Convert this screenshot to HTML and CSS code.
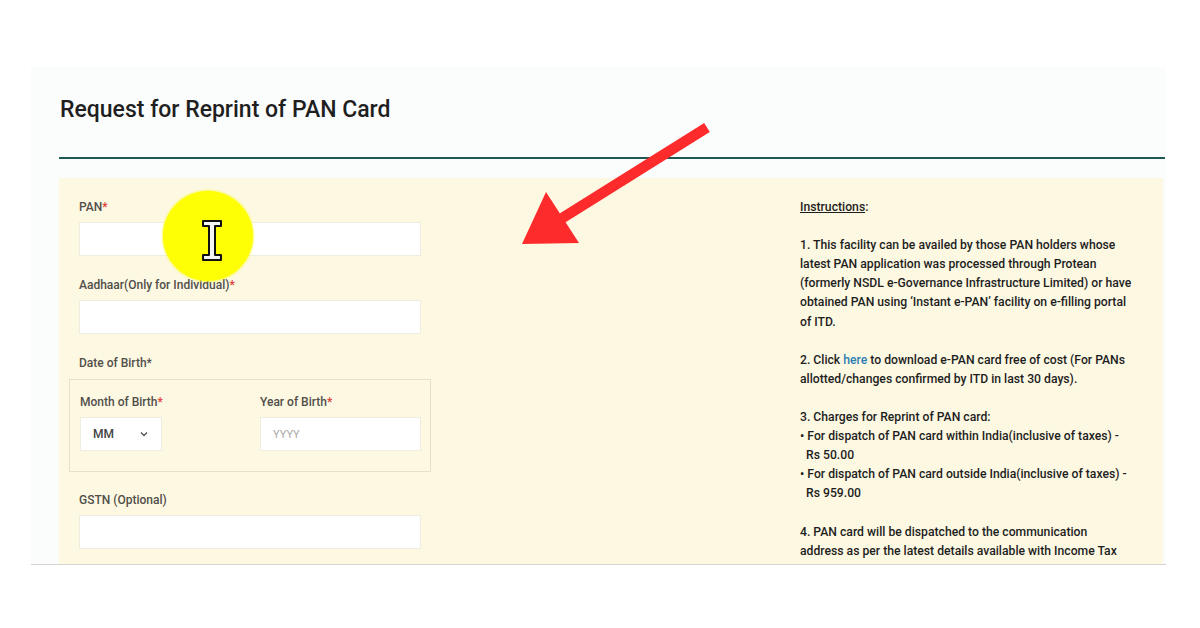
FILE: index.html
```html
<!DOCTYPE html>
<html lang="en">
<head>
<meta charset="utf-8">
<title>Request for Reprint of PAN Card</title>
<link rel="stylesheet" href="styles.css">
</head>
<body>
<div class="page">
  <div class="card">
    <h1 class="title">Request for Reprint of PAN Card</h1>
    <div class="rule"></div>
    <div class="panel">
      <form class="form">
        <label class="label">PAN<span class="req">*</span></label>
        <div class="input"></div>

        <label class="label">Aadhaar(Only for Individual)<span class="req">*</span></label>
        <div class="input"></div>

        <label class="label">Date of Birth<span class="req-dark">*</span></label>
        <div class="dob">
          <div class="dob-col">
            <label class="label">Month of Birth<span class="req">*</span></label>
            <div class="select">
              <span>MM</span>
              <svg class="chev" width="8" height="6" viewBox="0 0 8 6"><path d="M1 1.5 L4 4.5 L7 1.5" fill="none" stroke="#555" stroke-width="1.4"/></svg>
            </div>
          </div>
          <div class="dob-col">
            <label class="label">Year of Birth<span class="req">*</span></label>
            <div class="input year"><span class="ph">YYYY</span></div>
          </div>
        </div>

        <label class="label gstn">GSTN (Optional)</label>
        <div class="input"></div>
      </form>

      <div class="instr">
        <p><span class="u">Instructions</span>:</p>
        <p>1. This facility can be availed by those PAN holders whose<br>latest PAN application was processed through Protean<br>(formerly NSDL e-Governance Infrastructure Limited) or have<br>obtained PAN using ‘Instant e-PAN’ facility on e-filling portal<br>of ITD.</p>
        <p>2. Click <a class="link">here</a> to download e-PAN card free of cost (For PANs<br>allotted/changes confirmed by ITD in last 30 days).</p>
        <p>3. Charges for Reprint of PAN card:<br>• For dispatch of PAN card within India(inclusive of taxes) -<br><span class="ind">Rs 50.00</span><br>• For dispatch of PAN card outside India(inclusive of taxes) -<br><span class="ind">Rs 959.00</span></p>
        <p class="last">4. PAN card will be dispatched to the communication<br>address as per the latest details available with Income Tax</p>
      </div>
    </div>
  </div>

  <div class="highlight"></div>
  <svg class="ibeam" width="24" height="44" viewBox="0 0 24 44">
    <path d="M2 2 H20 V7 H14 V36 H20 V41 H2 V36 H8 V7 H2 Z" fill="#f4f4f4" stroke="#111" stroke-width="2" stroke-linejoin="round"/>
  </svg>
  <svg class="arrow" width="1200" height="628" viewBox="0 0 1200 628">
    <line x1="707" y1="127.5" x2="556" y2="222" stroke="#fd2b2b" stroke-width="10.5"/>
    <polygon points="546,192 522,244 579,243" fill="#fd2b2b"/>
  </svg>
</div>
</body>
</html>
```

FILE: styles.css
```css
* { box-sizing: border-box; }

html, body {
  margin: 0;
  padding: 0;
  background: #ffffff;
}

body {
  font-family: Roboto, "Liberation Sans", Arial, sans-serif;
  color: #222;
  width: 1200px;
  height: 628px;
  overflow: hidden;
}

.page {
  position: relative;
  width: 1200px;
  height: 628px;
  padding: 67px 0 0 31px;
}

.card {
  width: 1135px;
  height: 498px;
  background: #fbfdfd;
  border-bottom: 1px solid #d4d4d0;
  padding: 29px 1px 0 28px;
  overflow: hidden;
}

.title {
  margin: 0 0 0 1px;
  font-size: 23px;
  line-height: 28px;
  font-weight: 500;
  color: #1f1f1f;
}

.rule {
  margin-top: 33px;
  height: 2px;
  background: #1f5753;
}

.panel {
  margin-top: 19px;
  width: 1104px;
  height: 400px;
  background: #fdf8e2;
  display: grid;
  grid-template-columns: 342px 345px;
  justify-content: space-between;
  padding: 0 18px 0 20px;
}

.form {
  display: flex;
  flex-direction: column;
  padding-top: 22px;
}

.label {
  display: block;
  font-size: 12px;
  line-height: 14px;
  font-weight: 500;
  color: #514f4a;
  margin-bottom: 8px;
}

.req { color: #e0403a; }
.req-dark { color: #514f4a; }

.input {
  height: 34px;
  background: #ffffff;
  border: 1px solid #efece0;
  margin-bottom: 22px;
}

.dob {
  margin: 1px 0 0 -10px;
  width: 362px;
  height: 93px;
  border: 1px solid #e6e0c8;
  display: grid;
  grid-template-columns: 170px 161px;
  gap: 10px;
  padding: 15px 10px 0 10px;
  margin-bottom: 21px;
}

.dob-col {
  display: flex;
  flex-direction: column;
}

.select {
  width: 82px;
  height: 34px;
  background: #fff;
  border: 1px solid #efece0;
  display: flex;
  align-items: center;
  justify-content: space-between;
  padding: 0 13px 0 12px;
  font-size: 12px;
  font-weight: 500;
  color: #444;
}

.chev { display: block; }

.input.year {
  width: 161px;
  margin: 0;
  display: flex;
  align-items: center;
  padding-left: 12px;
}

.ph {
  font-size: 11px;
  color: #a8a8a4;
}

.gstn { margin-top: 0; }

.instr {
  padding-top: 20px;
  font-size: 12.2px;
  line-height: 19.1px;
  font-weight: 500;
  color: #1e1e1e;
  white-space: nowrap;
}

.instr p {
  margin: 0 0 19.1px 0;
}

.instr p.last { margin: 0; }

.u { text-decoration: underline; }

.link { color: #2d7eb3; }

.ind { padding-left: 6px; }

.highlight {
  position: absolute;
  left: 163px;
  top: 191px;
  width: 90px;
  height: 90px;
  border-radius: 50%;
  background: #fefe05;
  box-shadow: 0 0 2px 1px rgba(254, 254, 5, 0.6);
}

.ibeam {
  position: absolute;
  left: 201px;
  top: 219px;
}

.arrow {
  position: absolute;
  left: 0;
  top: 0;
  pointer-events: none;
}
```
